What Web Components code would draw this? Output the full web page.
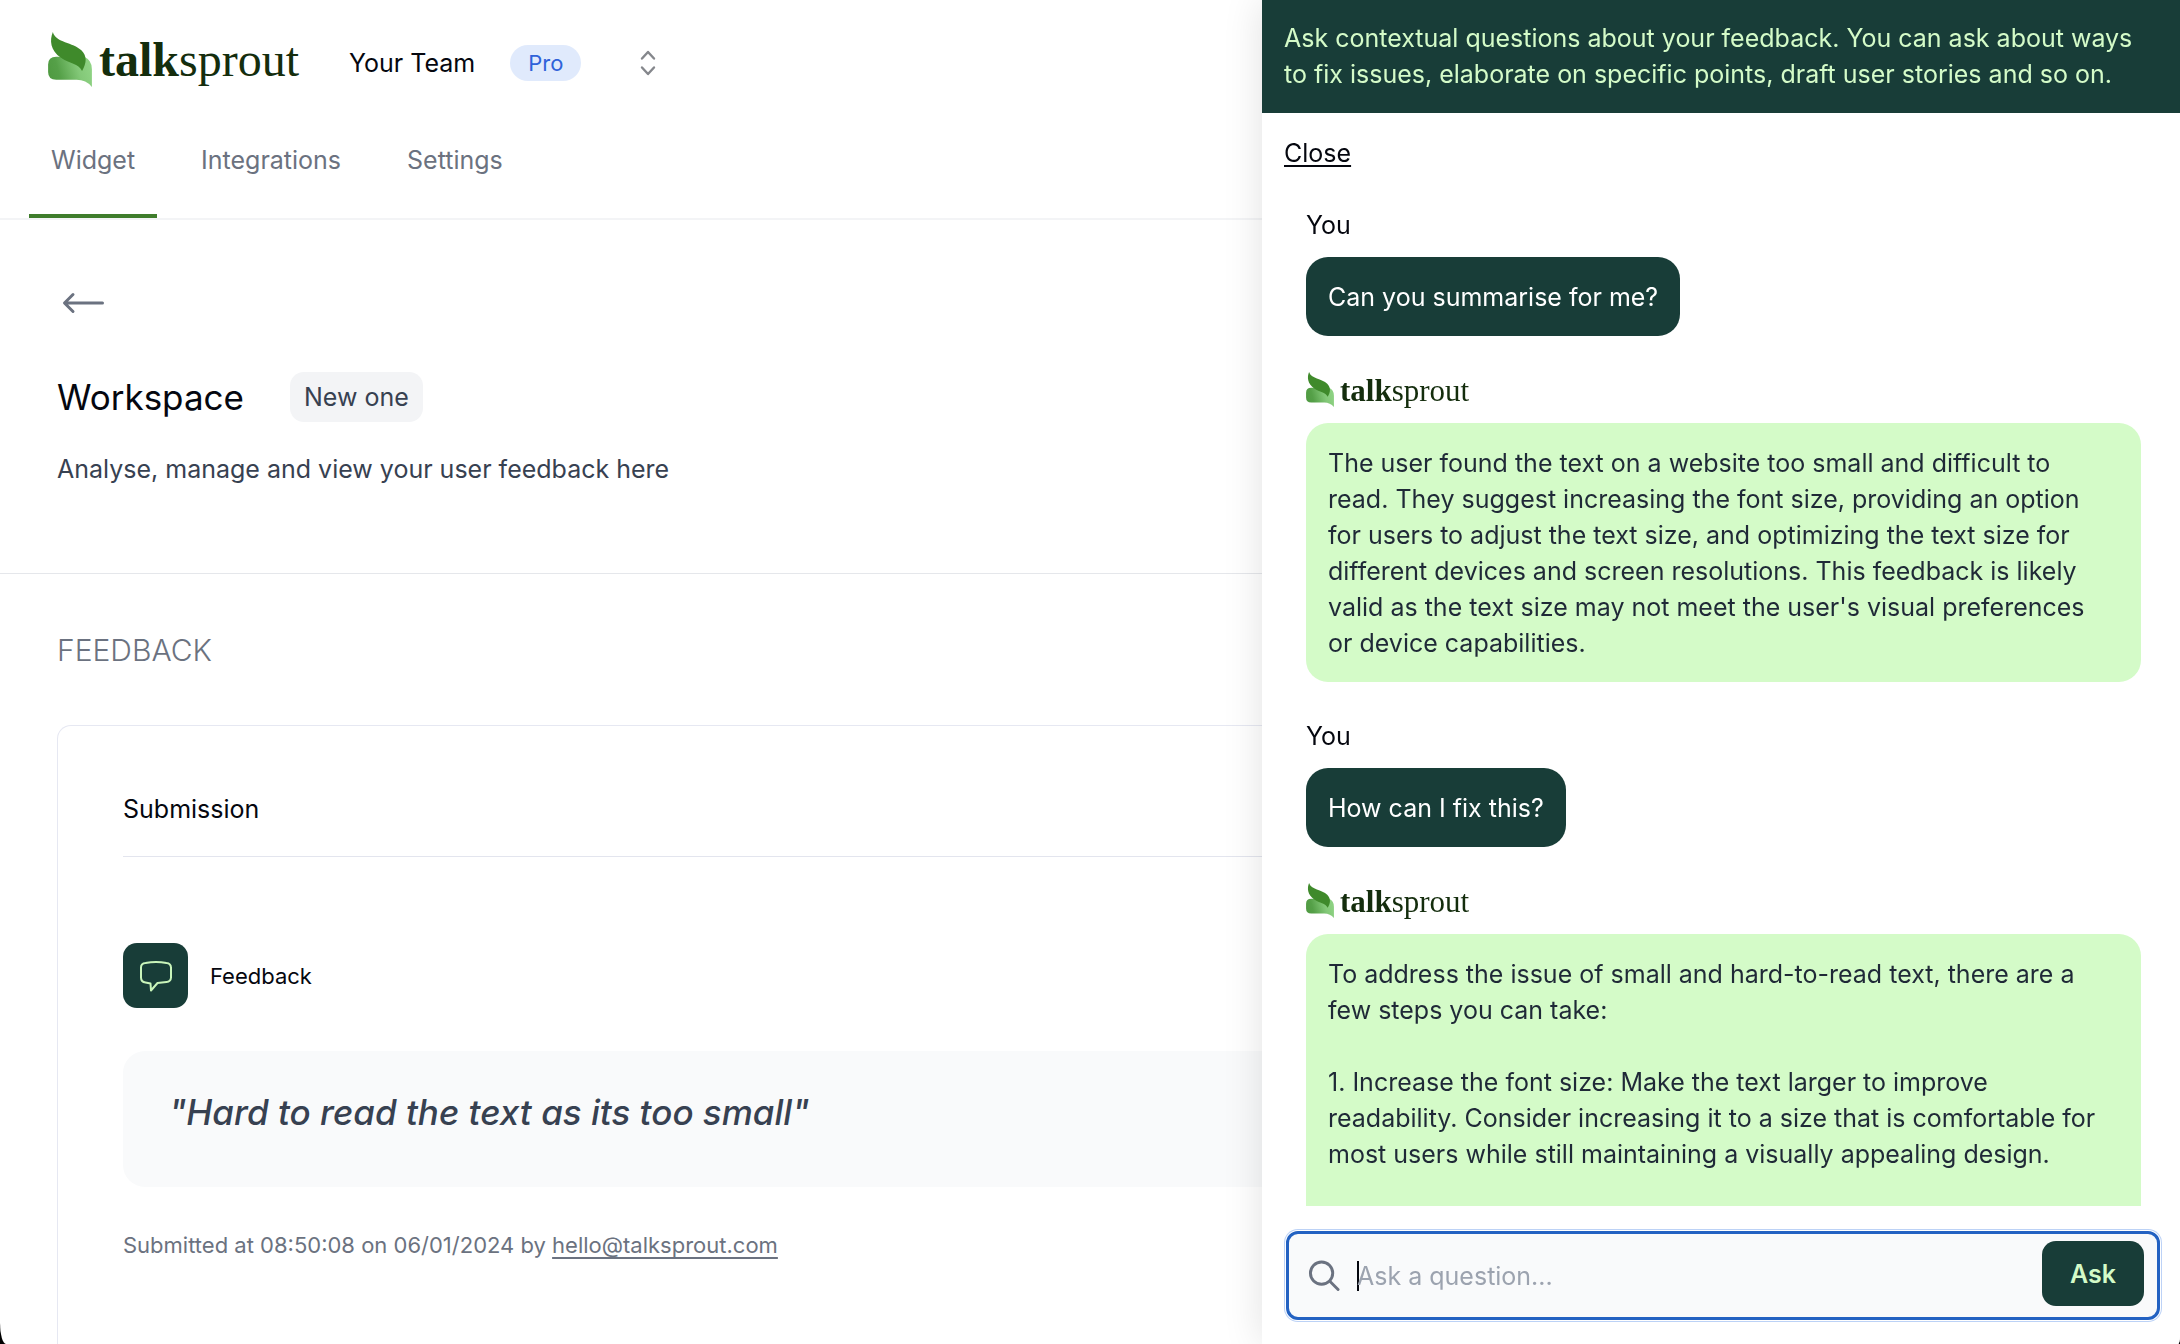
<!DOCTYPE html>
<html lang="en">
<head>
<meta charset="utf-8">
<title>Talksprout – Workspace</title>
<style>
  html { height: 100%; background: #000; }
  body {
    margin: 0; height: 100%; overflow: hidden;
    font-family: Inter, "Liberation Sans", sans-serif;
    font-size: 25px; line-height: 36px; color: #05070f;
    --forest: #183d38; --mint: #d4fbc8; --line: #e5e7eb; --gray: #6b7280; --slate: #374151;
  }
</style>
</head>
<body>
<app-shell>
  <app-header></app-header>
  <workspace-intro heading="Workspace" tag="New one">Analyse, manage and view your user feedback here</workspace-intro>
  <feedback-section heading="Feedback">
    <submission-card quote="&quot;Hard to read the text as its too small&quot;" when="08:50:08 on 06/01/2024" email="hello@talksprout.com"></submission-card>
  </feedback-section>
  <chat-drawer slot="drawer">
    <span slot="intro">Ask contextual questions about your feedback. You can ask about ways to fix issues, elaborate on specific points, draft user stories and so on.</span>
    <chat-message from="you">Can you summarise for me?</chat-message>
    <chat-message from="bot">The user found the text on a website too small and difficult to read. They suggest increasing the font size, providing an option for users to adjust the text size, and optimizing the text size for different devices and screen resolutions. This feedback is likely valid as the text size may not meet the user's visual preferences or device capabilities.</chat-message>
    <chat-message from="you">How can I fix this?</chat-message>
    <chat-message from="bot"><p>To address the issue of small and hard-to-read text, there are a few steps you can take:</p><p>1. Increase the font size: Make the text larger to improve readability. Consider increasing it to a size that is comfortable for most users while still maintaining a visually appealing design.</p></chat-message>
    <ask-box slot="footer"></ask-box>
  </chat-drawer>
</app-shell>

<script>
  const define = (name, render) => customElements.define(name, class extends HTMLElement {
    constructor() { super(); this.attachShadow({ mode: 'open' }); }
    connectedCallback() { this.shadowRoot.innerHTML = render(this); }
  });
  const esc = s => (s || '').replace(/&/g, '&amp;').replace(/"/g, '&quot;').replace(/</g, '&lt;');

  define('app-shell', () => `
    <style>
      :host { display: block; height: 100%; overflow: hidden; background: #fff; border-radius: 0 0 2px 6px / 0 0 8px 21px; }
      main { display: flex; flex-direction: column; height: 100%; }
    </style>
    <main><slot></slot></main>
    <slot name="drawer"></slot>`);

  define('sprout-logo', el => `
    <style>
      :host { display: inline-flex; align-items: flex-start; gap: 7px; color: #142d0d; }
      svg { width: 44px; height: 55px; flex: none; }
      span { font: 48px/55px "Liberation Serif", serif; }
      :host([small]) { gap: 6px; }
      :host([small]) svg { width: 28px; height: 35px; }
      :host([small]) span { font-size: 31px; line-height: 37px; }
    </style>
    <svg viewBox="24 36 129 162" aria-hidden="true">
      <defs><linearGradient id="g" x1="0" y1="0.6" x2="1" y2="0.4">
        <stop offset="0" stop-color="#4f9a41"/><stop offset="0.25" stop-color="#55a048"/><stop offset="0.7" stop-color="#83c878"/><stop offset="1" stop-color="#8fd384"/>
      </linearGradient></defs>
      <path fill="url(#g)" d="M24 132 Q24 109 48 109 L130 109 Q153 118 153 146 V198 Q136 177 108 177 H48 Q24 177 24 154 Z"/>
      <path fill="#3f8a2b" d="M38 36 C46 68 98 66 122 90 C139 107 138 127 124 151 C114 128 86 130 62 112 C30 90 28 60 38 36 Z"/>
    </svg>
    <span><b>talk</b>sprout</span>`);

  define('app-header', () => `
    <style>
      :host { display: block; border-bottom: 2px solid #f3f4f6; }
      .top { display: flex; align-items: center; height: 126px; padding-left: 48px; }
      sprout-logo { margin-bottom: 8px; }
      .team { display: flex; align-items: center; margin-left: 50px; padding: 0; border: 0; background: none; color: inherit; font: inherit; }
      .pro { margin: 0 59px 0 35px; padding: 0 18px; border-radius: 18px; background: #e0eafc; color: #2f62d9; font-size: 22px; }
      nav { display: flex; height: 92px; padding-left: 29px; gap: 22px; }
      nav a { padding: 16px 22px 0; color: var(--gray); text-decoration: none; border-bottom: 4px solid transparent; }
      nav a[aria-current] { border-color: #3f7d2c; }
    </style>
    <div class="top">
      <sprout-logo></sprout-logo>
      <button class="team">Your Team <span class="pro">Pro</span>
        <svg width="16" height="26" viewBox="0 0 16 26" fill="none" stroke="#85878c" stroke-width="2.400" stroke-linecap="round" stroke-linejoin="round" aria-hidden="true"><path d="M2 8.500 8 2l6 6.500M2 17.500 8 24l6-6.500"/></svg>
      </button>
    </div>
    <nav><a href="#widget" aria-current="page">Widget</a><a href="#integrations">Integrations</a><a href="#settings">Settings</a></nav>`);

  define('workspace-intro', el => `
    <style>
      :host { display: flex; flex-direction: column; align-items: flex-start; padding: 72px 57px 86px; border-bottom: 1px solid var(--line); }
      .back { display: block; height: 22px; padding-left: 5px; }
      svg { display: block; }
      .title { display: flex; align-items: center; gap: 46px; margin: 58px 0 29px; }
      h1 { margin: 0; font-size: 35px; line-height: 50px; font-weight: 400; }
      .tag { padding: 7px 14px; border-radius: 14px; background: #f3f4f6; color: var(--slate); }
      p { margin: 0; color: var(--slate); }
    </style>
    <a class="back" href="#back" aria-label="Back"><svg width="43" height="22" viewBox="0 0 43 22" fill="none" stroke="#6b7280" stroke-width="3" stroke-linecap="round" stroke-linejoin="round"><path d="M40.500 11H3M11 2.500 2.500 11l8.500 8.500"/></svg></a>
    <div class="title"><h1>${esc(el.getAttribute('heading'))}</h1><span class="tag">${esc(el.getAttribute('tag'))}</span></div>
    <p><slot></slot></p>`);

  define('feedback-section', el => `
    <style>
      :host { display: flex; flex-direction: column; flex: 1; padding: 58px 57px 0; }
      h2 { margin: 0 0 57px; font-size: 30px; line-height: 36px; font-weight: 300; color: var(--gray); text-transform: uppercase; }
    </style>
    <h2>${esc(el.getAttribute('heading'))}</h2><slot></slot>`);

  define('submission-card', el => `
    <style>
      :host { display: block; flex: 1; padding: 65px; border: 1px solid #e6e8f2; border-bottom: 0; border-radius: 14px 14px 0 0; }
      h3 { margin: 0 0 86px; padding-bottom: 29px; border-bottom: 1px solid #e3e5ee; font-size: 25px; line-height: 36px; font-weight: 400; }
      .kind { display: flex; align-items: center; gap: 22px; font-size: 22px; }
      .badge { display: grid; place-items: center; width: 65px; height: 65px; border-radius: 14px; background: var(--forest); }
      blockquote { margin: 43px 0; padding: 43px 46px; height: 50px; border-radius: 22px; background: #f9fafb; color: var(--slate); font-size: 35px; line-height: 36px; font-weight: 500; font-style: italic; }
      p { margin: 0; color: var(--gray); font-size: 22px; line-height: 30px; }
      a { color: inherit; text-underline-offset: 4px; }
    </style>
    <h3>Submission</h3>
    <div class="kind"><span class="badge"><svg width="34" height="32" viewBox="0 0 34 32" fill="none" stroke="#c9f5ba" stroke-width="2" stroke-linejoin="round" aria-hidden="true"><path d="M6.500 3Q17 .8 27.500 3 31.800 3.500 32 7.500V17.500Q31.800 21.500 27.500 22L18.500 23 12 30.500 11.500 23.500 6.500 22.500Q2 22 2 17.500V7.500Q2 3.500 6.500 3Z"/></svg></span>Feedback</div>
    <blockquote>${esc(el.getAttribute('quote'))}</blockquote>
    <p>Submitted at ${esc(el.getAttribute('when'))} by <a href="mailto:${esc(el.getAttribute('email'))}">${esc(el.getAttribute('email'))}</a></p>`);

  define('chat-drawer', () => `
    <style>
      :host { position: fixed; top: 0; right: 0; bottom: 0; width: 918px; max-width: 100%; display: flex; flex-direction: column; background: #fff; box-shadow: 0 0 40px rgba(0,0,0,.12); border-bottom-right-radius: 2px 8px; }
      header { padding: 20px 22px 21px; background: var(--forest); color: var(--mint); }
      .close { align-self: flex-start; margin: 22px 22px 0; padding: 0; border: 0; background: none; color: inherit; font: inherit; text-decoration: underline 2px; text-underline-offset: 3px; }
      .log { flex: 1; min-height: 0; overflow: hidden; display: flex; flex-direction: column; gap: 36px; padding: 36px 39px 0 44px; }
    </style>
    <header><slot name="intro"></slot></header>
    <button class="close">Close</button>
    <div class="log"><slot></slot></div>
    <slot name="footer"></slot>`);

  define('chat-message', el => `
    <style>
      :host { display: flex; flex: none; flex-direction: column; align-items: flex-start; gap: 14px; }
      .bubble { padding: 22px 22px 21px; border-radius: 22px; }
      :host([from=you]) .bubble { background: var(--forest); color: #fff; }
      :host([from=bot]) .bubble { padding-right: 32px; background: var(--mint); color: #1f2937; align-self: stretch; }
      ::slotted(p) { margin: 0 0 36px; }
    </style>
    ${el.getAttribute('from') === 'you' ? '<span>You</span>' : '<sprout-logo small></sprout-logo>'}
    <div class="bubble"><slot></slot></div>`);

  define('ask-box', () => `
    <style>
      :host { display: block; padding: 25px 20px 24px 24px; }
      form { display: flex; align-items: center; box-sizing: border-box; height: 89px; padding: 0 13px 0 19px; border: 3px solid #2362c2; border-radius: 12px; background: #f9fafb; box-shadow: 0 0 0 1px #fff, 0 0 0 2px #bcd2f6; }
      svg { flex: none; margin-right: 17px; }
      .caret { width: 2px; height: 30px; margin-right: -2px; background: #05070f; }
      input { flex: 1; min-width: 0; height: 60px; padding: 0; border: 0; outline: 0; background: none; font: inherit; color: inherit; }
      input::placeholder { color: #9ca3af; opacity: 1; }
      button { width: 102px; height: 65px; margin-bottom: 4px; padding: 0; border: 0; border-radius: 14px; background: var(--forest); color: var(--mint); font: inherit; font-weight: 600; }
    </style>
    <form>
      <svg width="32" height="32" viewBox="0 0 33 33" fill="none" stroke="#6b7280" stroke-width="3" stroke-linecap="round" aria-hidden="true"><circle cx="14" cy="13.500" r="11.500"/><path d="m22.500 22 8.500 8.500"/></svg>
      <span class="caret"></span>
      <input type="text" placeholder="Ask a question..." aria-label="Ask a question">
      <button type="submit">Ask</button>
    </form>`);
</script>
</body>
</html>
